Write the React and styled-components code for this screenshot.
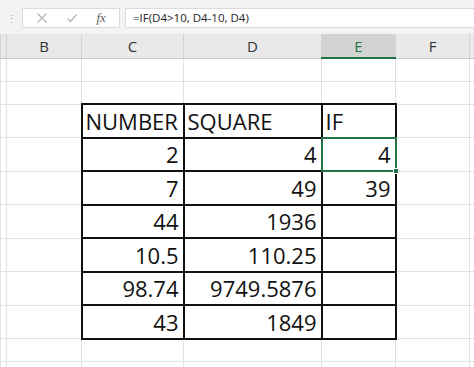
import React from 'react'
import styled, { createGlobalStyle } from 'styled-components'

const GlobalStyle = createGlobalStyle`
    html, body {
        margin: 0;
        padding: 0;
        background: #ffffff;
        overflow: hidden;
    }
    body {
        font-family: "Open Sans", "Liberation Sans", sans-serif;
    }
`

const Window = styled.div`
    width: 474px;
    height: 367px;
    overflow: hidden;
    background: #ffffff;
`

const FormulaBar = styled.div`
    align-items: center;
    background: #f3f3f3;
    box-sizing: border-box;
    display: flex;
    height: 34px;
    padding: 8px 0 6px 0;
`

const Grip = styled.div`
    color: #a8a8a8;
    font-size: 11px;
    text-align: center;
    width: 22px;
    line-height: 1;
`

const IconBox = styled.div`
    align-items: center;
    background: #ffffff;
    border: 1px solid #dadada;
    box-sizing: border-box;
    display: flex;
    height: 20px;
    justify-content: space-around;
    width: 98px;
    padding: 0 4px;
`

const FxMark = styled.span`
    color: #5a5a5a;
    font-family: "Liberation Serif", serif;
    font-style: italic;
    font-size: 13px;
`

const FormulaInput = styled.div`
    background: #ffffff;
    border: 1px solid #dadada;
    border-right: none;
    box-sizing: border-box;
    color: #222222;
    flex: 1;
    font-size: 11.5px;
    height: 20px;
    line-height: 18px;
    margin-left: 5px;
    padding-left: 7px;
`

const Sheet = styled.table`
    border-collapse: collapse;
    table-layout: fixed;
    width: 489px;
`

const ColHead = styled.th`
    background: ${p => p.$active ? '#d3d3d3' : '#e9e9e9'};
    border-left: 1px solid #d2d2d2;
    border-right: 1px solid #d2d2d2;
    border-bottom: ${p => p.$active ? '2px solid #217346' : '1px solid #c8c8c8'};
    color: ${p => p.$active ? '#217346' : '#333333'};
    font-size: 15px;
    font-weight: 400;
    height: 23px;
    padding: 0;
    text-align: center;
`

const Row = styled.tr`
    height: ${p => p.$tall ? '33.5px' : '23px'};
`

const Cell = styled.td`
    border: ${p => p.$boxed ? '2px solid #111111' : '1px solid #e1e1e1'};
    color: #111111;
    font-size: 22px;
    line-height: 1;
    padding: 0 4px 0 3px;
    position: relative;
    text-align: ${p => p.$num ? 'right' : 'left'};
    white-space: nowrap;
`

const Selection = styled.div`
    border: 2px solid #217346;
    bottom: -2px;
    left: -2px;
    pointer-events: none;
    position: absolute;
    right: -2px;
    top: -2px;

    &::after {
        background: #217346;
        border: 1px solid #ffffff;
        bottom: -4px;
        content: '';
        height: 4px;
        position: absolute;
        right: -4px;
        width: 4px;
    }
`

const columns = ['', 'B', 'C', 'D', 'E', 'F', '']
const widths = [6, 75, 102, 138, 74, 74, 20]

const tableRows = [
    ['NUMBER', 'SQUARE', 'IF'],
    ['2', '4', '4'],
    ['7', '49', '39'],
    ['44', '1936', ''],
    ['10.5', '110.25', ''],
    ['98.74', '9749.5876', ''],
    ['43', '1849', ''],
]

const Cross = () => (
    <svg width="12" height="12" viewBox="0 0 12 12">
        <path d="M1.5 1.5 L10.5 10.5 M10.5 1.5 L1.5 10.5" stroke="#b4b4b4" strokeWidth="1.2" fill="none" />
    </svg>
)

const Tick = () => (
    <svg width="12" height="12" viewBox="0 0 12 12">
        <path d="M1.5 6.5 L4.5 9.5 L10.5 2.5" stroke="#b4b4b4" strokeWidth="1.2" fill="none" />
    </svg>
)

function EmptyRow({ tall }) {
    return (
        <Row $tall={tall}>
            {columns.map((c, i) => <Cell key={i} />)}
        </Row>
    )
}

export default function App() {
    return (
        <Window>
            <GlobalStyle />
            <FormulaBar>
                <Grip>⋮</Grip>
                <IconBox>
                    <Cross />
                    <Tick />
                    <FxMark>fx</FxMark>
                </IconBox>
                <FormulaInput>=IF(D4&gt;10, D4-10, D4)</FormulaInput>
            </FormulaBar>
            <Sheet>
                <colgroup>
                    {widths.map((w, i) => <col key={i} style={{ width: w }} />)}
                </colgroup>
                <thead>
                    <tr>
                        {columns.map((c, i) => (
                            <ColHead key={i} $active={c === 'E'}>{c}</ColHead>
                        ))}
                    </tr>
                </thead>
                <tbody>
                    <EmptyRow />
                    <EmptyRow />
                    {tableRows.map((r, ri) => (
                        <Row key={ri} $tall>
                            <Cell />
                            <Cell />
                            {r.map((v, ci) => (
                                <Cell key={ci} $boxed $num={ri > 0}>
                                    {v}
                                    {ri === 1 && ci === 2 && <Selection />}
                                </Cell>
                            ))}
                            <Cell />
                            <Cell />
                        </Row>
                    ))}
                    <EmptyRow />
                    <EmptyRow />
                </tbody>
            </Sheet>
        </Window>
    )
}
